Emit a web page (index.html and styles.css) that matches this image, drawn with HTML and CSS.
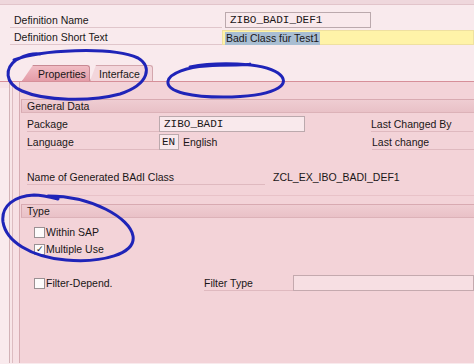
FILE: index.html
```html
<!DOCTYPE html>
<html lang="de">
<head>
    <meta charset="UTF-8">
    <title>BAdI Definition</title>
    <link rel="stylesheet" href="styles.css">
</head>
<body>
    <div class="topbar"></div>

    <div class="header">
        <div class="hrow">
            <span class="hlabel">Definition Name</span>
            <span class="field mono name-field">ZIBO_BADI_DEF1</span>
        </div>
        <div class="hrow">
            <span class="hlabel">Definition Short Text</span>
            <span class="field edit"><span class="sel">Badi Class für Test1</span></span>
        </div>
    </div>

    <div class="tabs">
        <span class="tab active">Properties</span>
        <span class="tab">Interface</span>
    </div>

    <div class="page">
        <div class="page-inner">
            <div class="page-body">
                <div class="group">
                    <div class="group-title">General Data</div>
                    <div class="row first">
                        <span class="label">Package</span>
                        <span class="field mono pkg">ZIBO_BADI</span>
                        <span class="rlabel">Last Changed By</span>
                    </div>
                    <div class="row">
                        <span class="label">Language</span>
                        <span class="field mono lang">EN</span>
                        <span class="plain">English</span>
                        <span class="rlabel">Last change</span>
                    </div>
                    <div class="row gen">
                        <span class="label wide">Name of Generated BAdI Class</span>
                        <span class="plain">ZCL_EX_IBO_BADI_DEF1</span>
                    </div>
                </div>

                <div class="group type">
                    <div class="group-title">Type</div>
                    <label class="check first"><span class="box"></span>Within SAP</label>
                    <label class="check"><span class="box on">&#10003;</span>Multiple Use</label>
                    <div class="filter">
                        <label class="check"><span class="box"></span>Filter-Depend.</label>
                        <span class="flabel">Filter Type</span>
                        <span class="field ffield"></span>
                    </div>
                </div>
            </div>
        </div>
    </div>

    <!-- pen marks drawn over the screenshot -->
    <svg class="marks" width="474" height="364" viewBox="0 0 474 364">
        <path d="M14 60 C40 50 110 46 138 58 C152 66 150 84 120 94 C90 102 45 101 22 91 C4 83 5 68 16 60 C24 55 34 53 40 54"/>
        <path d="M190 67 C215 62 262 62 278 73 C292 83 280 95 232 97 C192 98 166 92 168 81 C170 73 188 67 206 66 C230 64 248 66 250 64"/>
        <path d="M48 196 C92 196 130 218 133 236 C136 254 102 263 66 260 C30 257 6 241 3 222 C1 206 14 196 34 195 C42 195 50 197 58 199"/>
    </svg>
</body>
</html>
```

FILE: styles.css
```css
body {
    margin: 0;
    position: relative;
    width: 474px;
    height: 364px;
    overflow: hidden;
    background-color: #f9eaed;
    font-family: "Liberation Sans", Arial, sans-serif;
    font-size: 10.5px;
    color: #1a1617;
}
.topbar {
    height: 4px;
    background-color: #efd7dc;
    border-bottom: 1px solid #e2c4ca;
}
.header {
    padding: 7px 0 0 10px;
}
.hrow {
    display: flex;
    height: 16px;
    margin-bottom: 1px;
}
.hlabel {
    width: 208px;
    padding-left: 4px;
    line-height: 16px;
    border-bottom: 1px solid #e0c6cb;
}
.field {
    box-sizing: border-box;
    height: 16px;
    background-color: #f9e9ec;
    border: 1px solid #bba9ad;
    line-height: 14px;
}
.mono {
    font-family: "Liberation Mono", "Courier New", monospace;
    font-size: 11px;
    padding-left: 4px;
}
.name-field {
    width: 146px;
    margin-left: 3px;
}
.edit {
    flex: 1;
    height: 15px;
    margin-top: 1px;
    background-color: #fff3a8;
    border-color: #efe0a0;
    padding-left: 2px;
}
.sel {
    display: inline-block;
    background-color: #a9bed2;
    padding: 0 1px;
    line-height: 13px;
}
.tabs {
    display: flex;
    margin-top: 20px;
    padding-left: 22px;
    height: 16px;
    border-bottom: 1px solid #d68f99;
    box-shadow: 0 6px 0 #f7e2e6;
}
.tab {
    box-sizing: border-box;
    height: 16px;
    line-height: 16px;
    background-color: #f3d6db;
    border: 1px solid #d3a6ad;
    border-bottom: none;
    width: 63px;
    padding-left: 8px;
    border-radius: 0 3px 0 0;
    clip-path: polygon(6px 0, 100% 0, 100% 100%, 0 100%);
}
.tab.active {
    width: 68px;
    padding-left: 15px;
    background: linear-gradient(#f1bcc4, #e39ca7);
    border-color: #c88993;
    clip-path: polygon(11px 0, 100% 0, 100% 100%, 0 100%);
}
.page {
    margin-left: 9px;
    height: 281px;
    border-left: 1px solid #d2b2b7;
    padding-left: 2px;
    background-color: #f8e5e8;
}
.page-inner {
    height: 100%;
    border-left: 1px solid #dcbcc1;
    padding-left: 6px;
    background-color: #f7e0e4;
}
.page-body {
    height: 100%;
    box-sizing: border-box;
    padding-top: 17px;
    border-left: 1px solid #d6acb3;
    background-color: #f3d3d8;
}
.group {
    margin-left: 1px;
    height: 96px;
    border-bottom: 1px solid #e8c2c8;
}
.group-title {
    box-sizing: border-box;
    height: 14px;
    line-height: 13px;
    padding-left: 5px;
    background: linear-gradient(#efcdd2, #e9c1c7);
    border-top: 1px solid #d8aab1;
    border-left: 1px solid #d8aab1;
    border-bottom: 1px solid #dcb2b8;
}
.row {
    display: flex;
    height: 16px;
    margin-top: 2px;
    padding-left: 6px;
}
.row.first {
    margin-top: 3px;
}
.row.gen {
    margin-top: 19px;
}
.label {
    width: 132px;
    line-height: 16px;
    border-bottom: 1px solid #dfb9bf;
}
.label.wide {
    width: 238px;
    margin-right: 4px;
}
.plain {
    line-height: 16px;
    padding-left: 4px;
}
.pkg {
    width: 146px;
}
.lang {
    width: 20px;
    padding-left: 2px;
}
.rlabel {
    margin-left: auto;
    width: 102px;
    line-height: 16px;
    border-bottom: 1px solid #dfb9bf;
}
.row.first .rlabel {
    margin-left: 66px;
}
.type {
    margin-top: 8px;
    height: auto;
    border-bottom: none;
}
.check {
    display: flex;
    align-items: center;
    height: 14px;
    margin-top: 3px;
    padding-left: 13px;
}
.check.first {
    margin-top: 7px;
}
.box {
    box-sizing: border-box;
    width: 11px;
    height: 11px;
    margin-right: 1px;
    background-color: #fdfbfb;
    border: 1px solid #9a9093;
    font-size: 9px;
    line-height: 9px;
    text-align: center;
    color: #222;
}
.filter {
    display: flex;
    margin-top: 19px;
    height: 16px;
}
.filter .check {
    margin-top: 1px;
    width: 170px;
}
.flabel {
    width: 89px;
    line-height: 16px;
    border-bottom: 1px solid #dfb9bf;
}
.ffield {
    flex: 1;
    background-color: #f7dfe3;
    border-color: #c4a9ae;
}
.marks {
    position: absolute;
    top: 0;
    left: 0;
    pointer-events: none;
}
.marks path {
    fill: none;
    stroke: #1f24b8;
    stroke-width: 3;
    stroke-linecap: round;
    stroke-linejoin: round;
}
```
